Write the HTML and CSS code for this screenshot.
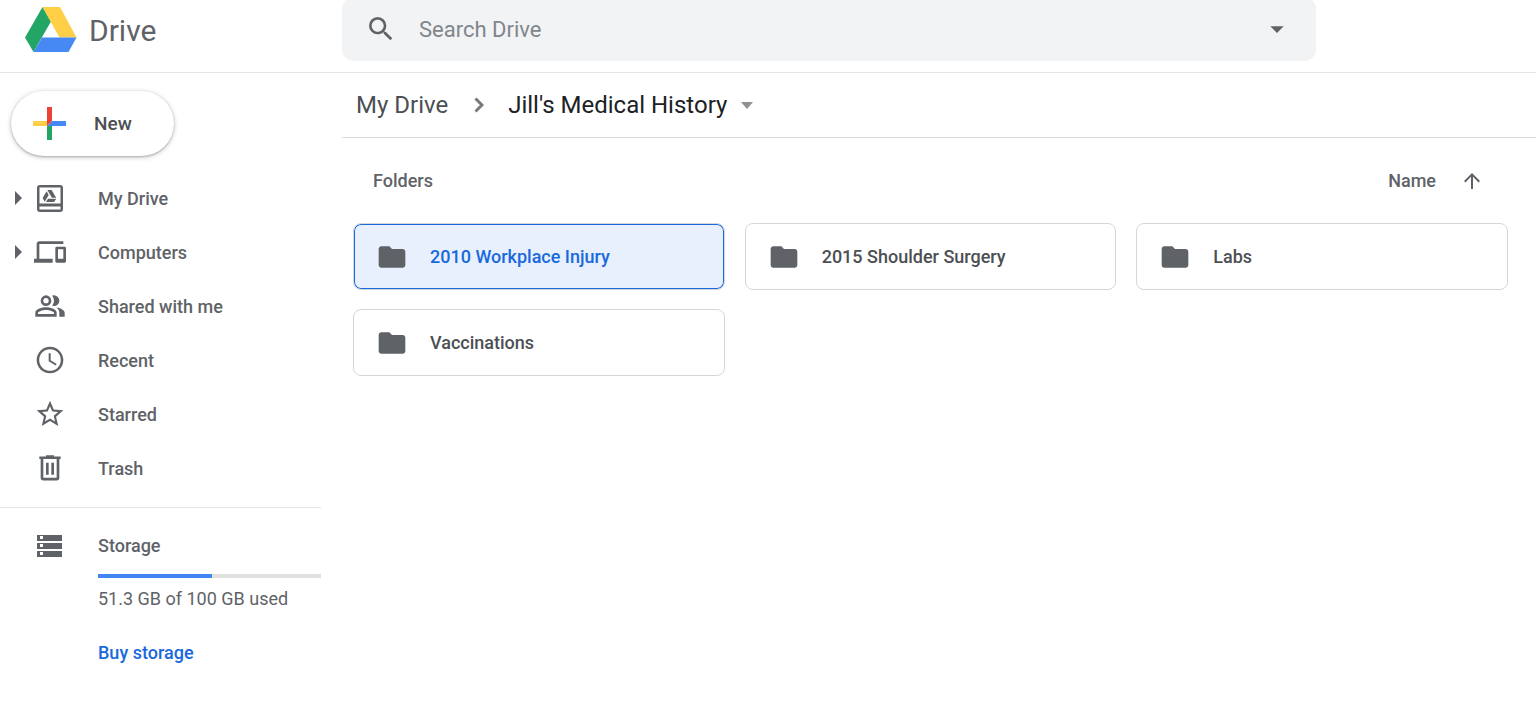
FILE: index.html
```html
<!DOCTYPE html>
<html lang="en">
<head>
  <meta charset="UTF-8">
  <meta name="viewport" content="width=device-width, initial-scale=1.0">
  <title>Jill's Medical History - Drive</title>
  <link rel="stylesheet" href="styles.css">
</head>
<body>
  <header class="header">
    <a class="brand" href="#">
      <svg class="logo" viewBox="0 0 52 46" aria-hidden="true">
        <path fill="#23a566" d="M17.5 0 26 14.500 8.500 45 0 30.500z"/>
        <path fill="#ffcf48" d="M17.500 0h17.500L51.500 30.500H34.500z"/>
        <path fill="#4688f4" d="M17 30.500h34.500L43.500 45h-35z"/>
      </svg>
      <span>Drive</span>
    </a>
    <form class="search" role="search">
      <button class="icon-button" type="button" aria-label="Search">
        <svg class="icon" viewBox="0 0 24 24"><path d="M15.500 14h-.79l-.28-.27A6.470 6.470 0 0 0 16 9.500 6.500 6.500 0 1 0 9.500 16c1.610 0 3.090-.59 4.230-1.570l.27.28v.79l5 4.990L20.490 19l-4.990-5zm-6 0C7.010 14 5 11.990 5 9.500S7.010 5 9.500 5 14 7.010 14 9.500 11.990 14 9.500 14z"/></svg>
      </button>
      <input type="text" placeholder="Search Drive" aria-label="Search Drive">
      <button class="icon-button" type="button" aria-label="Search options">
        <svg class="icon" viewBox="0 0 24 24"><path d="M7 10l5 5 5-5z"/></svg>
      </button>
    </form>
  </header>

  <div class="layout">
    <aside class="sidebar">
      <button class="new-button" type="button">
        <svg class="plus" viewBox="0 0 33 33" aria-hidden="true">
          <path fill="#ffcf48" d="M0 14h14v5H0z"/>
          <path fill="#4688f4" d="M19 14h14v5H14z"/>
          <path fill="#23a566" d="M14 19h5v14h-5z"/>
          <path fill="#ea4335" d="M14 0h5v14l-5 5z"/>
        </svg>
        New
      </button>

      <nav>
        <ul class="nav-list">
          <li>
            <button class="toggle" type="button" aria-label="Expand My Drive"><svg viewBox="0 0 7 14"><path d="M0 0l7 7-7 7z"/></svg></button>
            <a href="#">
              <svg class="icon" viewBox="0 0 32 32"><path fill-rule="evenodd" d="M6 3h20a3 3 0 0 1 3 3v21a3 3 0 0 1-3 3H6a3 3 0 0 1-3-3V6a3 3 0 0 1 3-3zM5.500 5.500v16h21v-16zM5.500 24.500v3h21v-3z"/><path d="M13.300 8h4.300l4.600 7.700h-4.300zM12.600 9.300l2.100 3.700-4 6.700-2.100-3.700zM14 16.700h8.300l-2.200 3.400h-8.200z"/></svg>
              My Drive
            </a>
          </li>
          <li>
            <button class="toggle" type="button" aria-label="Expand Computers"><svg viewBox="0 0 7 14"><path d="M0 0l7 7-7 7z"/></svg></button>
            <a href="#">
              <svg class="icon" viewBox="0 0 24 24"><path d="M4 6h18V4H4c-1.100 0-2 .9-2 2v11H0v3h14v-3H4V6zm19 2h-6c-.55 0-1 .45-1 1v10c0 .55.45 1 1 1h6c.55 0 1-.45 1-1V9c0-.55-.45-1-1-1zm-1 9h-4v-7h4v7z"/></svg>
              Computers
            </a>
          </li>
          <li>
            <a href="#">
              <svg class="icon" viewBox="0 0 24 24"><path fill-rule="evenodd" d="M9 12a4 4 0 1 0 0-8 4 4 0 0 0 0 8zm0-6a2 2 0 1 1 0 4 2 2 0 0 1 0-4zM9 13c-2.670 0-8 1.340-8 4v3h16v-3c0-2.660-5.330-4-8-4zm6 5H3v-.99C3.200 16.290 6.300 15 9 15s5.800 1.290 6 2v1z"/><path d="M15 12a4 4 0 0 0 0-8c-.47 0-.91.1-1.330.24a5.980 5.980 0 0 1 0 7.520c.42.14.86.24 1.330.24zM16.670 13.130C18.040 14.060 19 15.320 19 17v3h4v-3c0-2.180-3.580-3.470-6.330-3.870z"/></svg>
              Shared with me
            </a>
          </li>
          <li>
            <a href="#">
              <svg class="icon" viewBox="0 0 24 24"><path d="M11.990 2C6.470 2 2 6.480 2 12s4.470 10 9.990 10C17.520 22 22 17.520 22 12S17.520 2 11.990 2zM12 20.100a8.100 8.100 0 1 1 0-16.200 8.100 8.100 0 0 1 0 16.200z"/><path d="M12.500 7H11v6l5.250 3.150.75-1.230-4.500-2.670z"/></svg>
              Recent
            </a>
          </li>
          <li>
            <a href="#">
              <svg class="icon" viewBox="0 0 24 24"><path d="M22 9.240l-7.190-.62L12 2 9.190 8.630 2 9.240l5.460 4.730L5.820 21 12 17.270 18.180 21l-1.630-7.030L22 9.240zM12 15.400l-3.760 2.270 1-4.280-3.320-2.880 4.380-.38L12 6.100l1.710 4.040 4.380.38-3.320 2.880 1 4.280L12 15.400z"/></svg>
              Starred
            </a>
          </li>
          <li>
            <a href="#">
              <svg class="icon" viewBox="0 0 24 24"><path fill-rule="evenodd" d="M9 2.500h6V3.300h5v2h-1v14a2 2 0 0 1-2 2H7a2 2 0 0 1-2-2v-14H4v-2h5zM7 5.300v14h10v-14zM9 8h2v9H9zM13 8h2v9h-2z"/></svg>
              Trash
            </a>
          </li>
        </ul>
      </nav>

      <section class="storage">
        <svg class="icon" viewBox="0 0 32 32" aria-hidden="true"><path fill-rule="evenodd" d="M3 5h25v6H3zM6 6v3h3V6zM3 13h25v6H3zM6 14v3h3v-3zM3 21h25v6H3zM6 22v3h3v-3z"/></svg>
        <div class="storage-info">
          <h2 id="storage-title">Storage</h2>
          <div class="bar" role="progressbar" aria-labelledby="storage-title" aria-valuenow="51" aria-valuemin="0" aria-valuemax="100">
            <div class="bar-fill" style="width: 51.3%"></div>
          </div>
          <p>51.3 GB of 100 GB used</p>
          <a href="#">Buy storage</a>
        </div>
      </section>
    </aside>

    <main class="main">
      <nav class="breadcrumb" aria-label="Breadcrumb">
        <a href="#">My Drive</a>
        <svg class="chevron" viewBox="0 0 10 16" aria-hidden="true"><path d="M1.500 1.500 8 8l-6.500 6.500"/></svg>
        <button class="current" type="button">
          Jill's Medical History
          <svg class="caret" viewBox="0 0 12 7" aria-hidden="true"><path d="M0 0h12L6 7z"/></svg>
        </button>
      </nav>

      <div class="list-header">
        <h1>Folders</h1>
        <button class="sort" type="button">
          Name
          <svg viewBox="0 0 24 24" aria-hidden="true"><path d="M4 12l1.410 1.410L11 7.830V20h2V7.830l5.580 5.590L20 12l-8-8-8 8z"/></svg>
        </button>
      </div>

      <div class="folders">
        <button class="folder selected" type="button">
          <svg class="icon" viewBox="0 0 24 24"><path d="M10 4H4c-1.100 0-1.990.9-1.990 2L2 18c0 1.100.9 2 2 2h16c1.100 0 2-.9 2-2V8c0-1.100-.9-2-2-2h-8l-2-2z"/></svg>
          2010 Workplace Injury
        </button>
        <button class="folder" type="button">
          <svg class="icon" viewBox="0 0 24 24"><path d="M10 4H4c-1.100 0-1.990.9-1.990 2L2 18c0 1.100.9 2 2 2h16c1.100 0 2-.9 2-2V8c0-1.100-.9-2-2-2h-8l-2-2z"/></svg>
          2015 Shoulder Surgery
        </button>
        <button class="folder" type="button">
          <svg class="icon" viewBox="0 0 24 24"><path d="M10 4H4c-1.100 0-1.990.9-1.990 2L2 18c0 1.100.9 2 2 2h16c1.100 0 2-.9 2-2V8c0-1.100-.9-2-2-2h-8l-2-2z"/></svg>
          Labs
        </button>
        <button class="folder" type="button">
          <svg class="icon" viewBox="0 0 24 24"><path d="M10 4H4c-1.100 0-1.990.9-1.990 2L2 18c0 1.100.9 2 2 2h16c1.100 0 2-.9 2-2V8c0-1.100-.9-2-2-2h-8l-2-2z"/></svg>
          Vaccinations
        </button>
      </div>
    </main>
  </div>
</body>
</html>
```
FILE: styles.css
```css
* {
  box-sizing: border-box;
}
body {
  margin: 0;
  font-family: Roboto, "Liberation Sans", sans-serif;
  font-size: 18px;
  color: #5f6368;
  background: #fff;
}
a {
  color: inherit;
  text-decoration: none;
}
button {
  font: inherit;
  color: inherit;
  background: none;
  border: none;
  padding: 0;
  cursor: pointer;
}
svg {
  display: block;
  flex: none;
  fill: currentColor;
}
.icon {
  width: 32px;
  height: 32px;
}

/* header */
.header {
  display: flex;
  align-items: flex-start;
  height: 73px;
  border-bottom: 1px solid #e4e5e8;
}
.brand {
  display: flex;
  align-items: center;
  gap: 12px;
  width: 342px;
  padding: 7px 0 0 25px;
  font-size: 30px;
}
.logo {
  width: 52px;
  height: 46px;
}
.search {
  display: flex;
  align-items: center;
  flex: 1;
  height: 64px;
  margin: -3px 220px 0 0;
  padding: 0 23px;
  background: #f1f3f4;
  border-radius: 12px;
}
.search input {
  flex: 1;
  min-width: 0;
  padding: 0 22px;
  border: none;
  outline: none;
  background: transparent;
  font: inherit;
  font-size: 22px;
  color: #202124;
}
.search input::placeholder {
  color: #80868b;
}

/* sidebar */
.layout {
  display: flex;
}
.sidebar {
  width: 321px;
  margin-right: 21px;
  flex: none;
}
.new-button {
  display: flex;
  align-items: center;
  gap: 28px;
  width: 163px;
  height: 65px;
  margin: 18px 0 15px 11px;
  padding-left: 22px;
  border-radius: 33px;
  box-shadow: 0 1px 2px rgba(60, 64, 67, 0.3), 0 1px 4px 1px rgba(60, 64, 67, 0.2);
  font-size: 19px;
  font-weight: 500;
  color: #4c4f53;
}
.plus {
  width: 33px;
  height: 33px;
}
.nav-list {
  list-style: none;
  margin: 0;
  padding: 0 0 12px;
  border-bottom: 1px solid #e4e5e8;
}
.nav-list li {
  display: grid;
  grid-template-columns: 34px 1fr;
  height: 54px;
}
.nav-list a {
  grid-column: 2;
  display: flex;
  align-items: center;
  gap: 32px;
  font-weight: 500;
}
.toggle {
  display: flex;
  align-items: center;
  padding-left: 15px;
}
.toggle svg {
  width: 7px;
  height: 14px;
}
.storage {
  display: flex;
  gap: 32px;
  padding: 22px 0 0 34px;
}
.storage-info {
  flex: 1;
}
.storage h2 {
  margin: 0;
  font-size: 18px;
  line-height: 32px;
  font-weight: 500;
}
.bar {
  height: 4px;
  margin: 12px 0 11px;
  background: #e0e0e0;
}
.bar-fill {
  height: 100%;
  background: #4285f4;
}
.storage p {
  margin: 0 0 32px;
  line-height: 20px;
}
.storage a {
  display: block;
  line-height: 24px;
  font-weight: 500;
  color: #1a69dc;
}

/* folder list */
.main {
  flex: 1;
  min-width: 0;
}
.breadcrumb {
  display: flex;
  align-items: center;
  height: 65px;
  padding-left: 14px;
  border-bottom: 1px solid #dadce0;
  font-size: 24px;
  color: #4c4f53;
}
.chevron {
  width: 10px;
  height: 16px;
  margin: 0 24px 0 26px;
  fill: none;
  stroke: #77797c;
  stroke-width: 3;
}
.current {
  display: flex;
  align-items: center;
  gap: 14px;
  color: #202124;
}
.caret {
  width: 12px;
  height: 7px;
  fill: #8f9194;
}
.list-header {
  display: flex;
  align-items: center;
  justify-content: space-between;
  height: 85px;
  padding: 0 52px 0 31px;
}
.list-header h1 {
  margin: 0;
  font-size: 18px;
  font-weight: 500;
}
.sort {
  display: flex;
  align-items: center;
  gap: 24px;
  font-weight: 500;
}
.sort svg {
  width: 24px;
  height: 24px;
}
.folders {
  display: grid;
  grid-template-columns: repeat(3, 1fr);
  gap: 19px 20px;
  padding: 0 28px 0 11px;
}
.folder {
  display: flex;
  align-items: center;
  gap: 22px;
  height: 67px;
  padding: 0 22px;
  border: 1px solid #d5d7db;
  border-radius: 8px;
  font-weight: 500;
  color: #4c4f53;
}
.folder .icon {
  fill: #5f6368;
}
.folder.selected {
  color: #1a69dc;
  background: #e8f0fe;
  box-shadow: inset 0 0 0 1px #1a69dc;
}
```
